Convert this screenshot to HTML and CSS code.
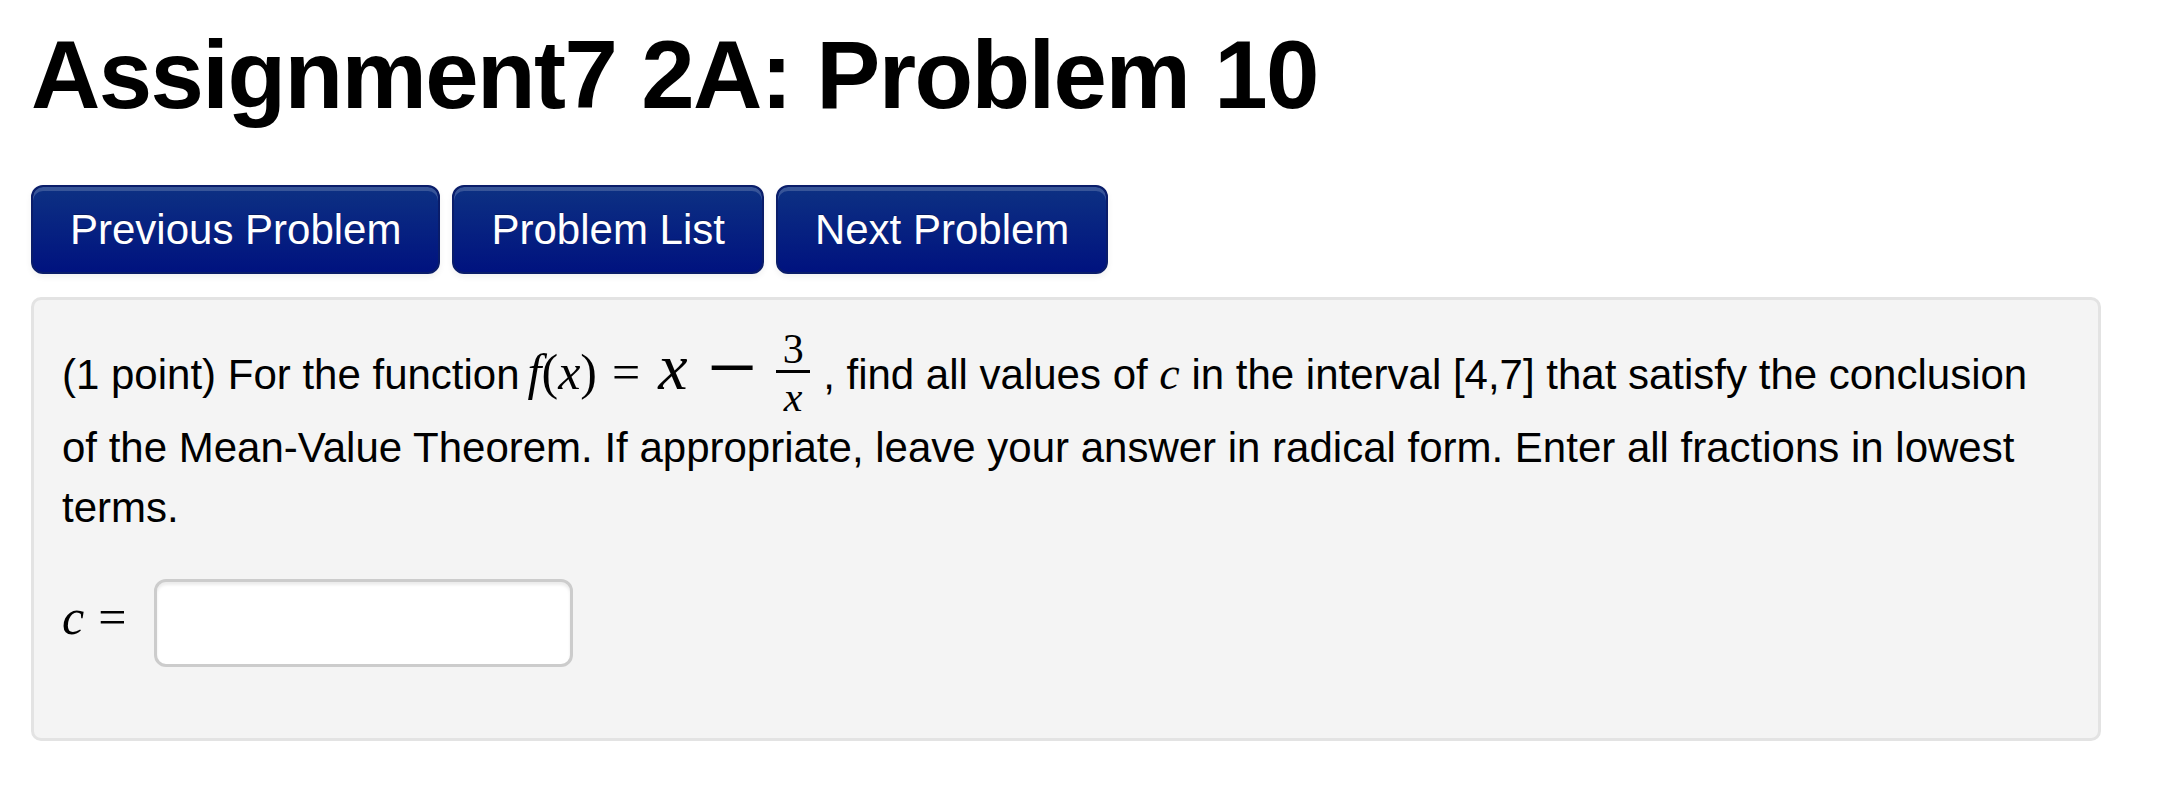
FILE: index.html
```html
<!DOCTYPE html>
<html lang="en">
  <head>
    <meta charset="UTF-8" />
    <meta name="viewport" content="width=device-width, initial-scale=1.0" />
    <title>Assignment7 2A: Problem 10</title>
    <link rel="stylesheet" href="styles.css">
  </head>
  <body>
    <div class="page">
      <h1 class="title">Assignment7 2A: Problem 10</h1>

      <div class="nav">
        <button class="nav-button">Previous Problem</button>
        <button class="nav-button">Problem List</button>
        <button class="nav-button">Next Problem</button>
      </div>

      <div class="problem">
        <p class="statement">
          (1 point) For the function<span class="math"><i>f</i>(<i>x</i>)<span class="eq">=</span><i class="big-x">x</i><span class="minus">&minus;</span><span class="frac"><span class="num">3</span><span class="bar"></span><span class="den"><i>x</i></span></span></span>, find all values of <i class="var">c</i> in the interval [4,7] that satisfy the conclusion
          of the Mean-Value Theorem. If appropriate, leave your answer in radical form. Enter all fractions in lowest
          terms.
        </p>

        <div class="answer">
          <span class="answer-label"><i>c</i><span class="eq">=</span></span>
          <input class="answer-input" type="text" />
        </div>
      </div>
    </div>
  </body>
</html>
```

FILE: styles.css
```css
body {
  margin: 0;
  font-family: "Liberation Sans", Arial, Helvetica, sans-serif;
  color: #000;
  background-color: #fff;
}

.page {
  width: 2070px;
  margin-left: 31px;
}

.title {
  margin: 20px 0 0;
  font-size: 96px;
  line-height: 110px;
  font-weight: bold;
  letter-spacing: -1.6px;
}

.nav {
  display: flex;
  gap: 12px;
  margin-top: 55px;
}

.nav-button {
  height: 89px;
  padding: 0 37px;
  font-family: "Liberation Sans", Arial, Helvetica, sans-serif;
  font-size: 42px;
  color: #fff;
  background: linear-gradient(#0d3183, #00127f);
  border: 2px solid #0a1d6a;
  border-radius: 12px;
  box-shadow: inset 0 4px 0 rgba(255, 255, 255, 0.18), 0 3px 6px rgba(0, 0, 0, 0.06);
  text-shadow: 0 -1px 0 rgba(0, 0, 0, 0.25);
  cursor: pointer;
}

.problem {
  margin-top: 23px;
  padding: 28px 40px 71px 28px;
  background-color: #f4f4f4;
  border: 3px solid #e3e3e3;
  border-radius: 10px;
}

.statement {
  margin: 0;
  font-size: 42px;
  line-height: 60px;
}

.math {
  margin-left: 8px;
  font-family: "Liberation Serif", "Times New Roman", serif;
  font-size: 50px;
}

.var {
  font-family: "Liberation Serif", "Times New Roman", serif;
  font-size: 46px;
}

.eq {
  font-style: normal;
  margin: 0 18px 0 15px;
}

.big-x {
  font-size: 66px;
}

.minus {
  font-size: 88px;
  vertical-align: -8px;
  margin: 0 19px 0 20px;
}

.frac {
  display: inline-flex;
  flex-direction: column;
  align-items: center;
  vertical-align: 26px;
  font-size: 42px;
  line-height: 1;
  margin-right: 13px;
}

.bar {
  width: 34px;
  height: 3px;
  margin: 0 0 3px;
  background-color: #000;
}

.answer {
  display: flex;
  align-items: center;
  margin-top: 41px;
}

.answer-label {
  font-family: "Liberation Serif", "Times New Roman", serif;
  font-size: 50px;
  line-height: 50px;
  padding-bottom: 12px;
  margin-right: 28px;
}

.answer-label .eq {
  margin: 0 0 0 14px;
}

.answer-input {
  width: 419px;
  height: 88px;
  box-sizing: border-box;
  background-color: #fff;
  border: 3px solid #ccc;
  border-radius: 12px;
  box-shadow: inset 0 3px 3px rgba(0, 0, 0, 0.08);
}
```
